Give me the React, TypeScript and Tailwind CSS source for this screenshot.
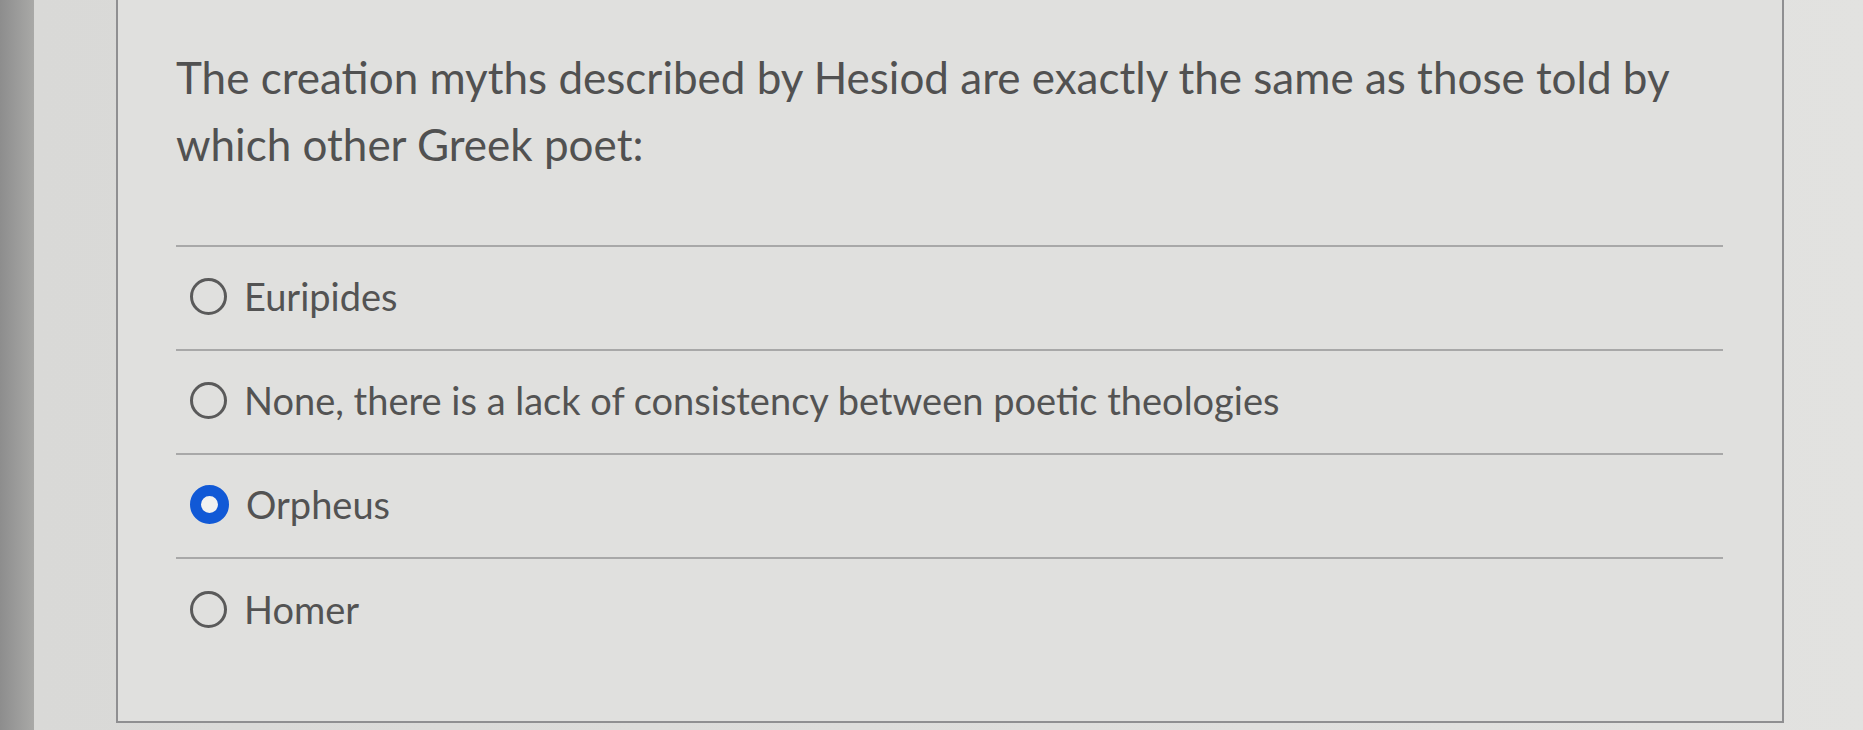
import React from 'react';

const options = [
  { label: 'Euripides', checked: false },
  { label: 'None, there is a lack of consistency between poetic theologies', checked: false },
  { label: 'Orpheus', checked: true },
  { label: 'Homer', checked: false },
];

const Radio: React.FC<{ checked: boolean }> = ({ checked }) =>
  checked ? (
    <span className="w-[39px] h-[39px] rounded-full border-[11px] border-[#1159d6] bg-[#f2f2f0] shrink-0" />
  ) : (
    <span className="w-[37px] h-[37px] rounded-full border-[3px] border-[#5a5a5a] shrink-0" />
  );

export default function App() {
  return (
    <div className="w-[1863px] h-[730px] overflow-hidden flex bg-[#dcdcda]" style={{ fontFamily: 'Lato, "Open Sans", sans-serif' }}>
      <div className="w-[34px] h-full shrink-0 bg-gradient-to-r from-[#8d8d8d] to-[#a9a9a7]" />
      <div className="flex-1 bg-gradient-to-r from-[#d9d9d7] to-[#e2e2e0]">
        <div className="ml-[82px] w-[1668px] h-[723px] border-x-2 border-b-2 border-[#8f8f91] bg-[#e0e0de] pl-[58px] pr-[59px] pt-[44px]">
          <h1 className="text-[44px] leading-[67px] text-[#515151] font-normal">
            The creation myths described by Hesiod are exactly the same as those told by which other Greek poet:
          </h1>
          <div className="mt-[67px] border-t-2 border-[#a8a8a8]">
            {options.map((o, i) => (
              <div
                key={o.label}
                className={`h-[104px] flex items-center gap-[17px] pl-[14px] pb-[4px] ${i < options.length - 1 ? 'border-b-2 border-[#a8a8a8]' : ''}`}
              >
                <Radio checked={o.checked} />
                <span className="text-[38px] text-[#535353]">{o.label}</span>
              </div>
            ))}
          </div>
        </div>
      </div>
    </div>
  );
}
